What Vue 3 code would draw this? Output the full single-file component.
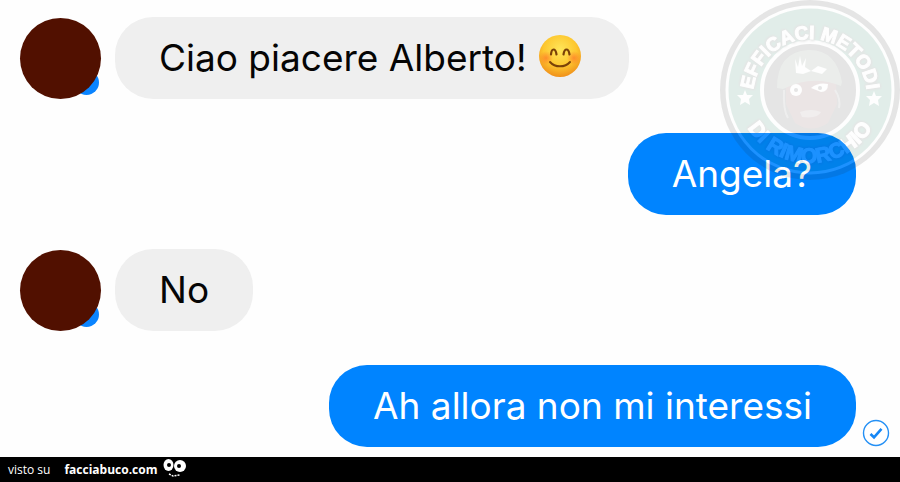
<script setup>
const messages = [
    { id: 1, text: 'Ciao piacere Alberto!', mine: false, emoji: true },
    { id: 2, text: 'Angela?', mine: true },
    { id: 3, text: 'No', mine: false },
    { id: 4, text: 'Ah allora non mi interessi', mine: true, sent: true }
]
</script>

<template>
    <div class="page">
        <main class="chat">
            <div v-for="message in messages" :key="message.id" class="row" :class="{ mine: message.mine }">
                <div v-if="!message.mine" class="avatar">
                    <span class="badge"></span>
                    <span class="face"></span>
                </div>
                <p class="bubble">
                    <span>{{ message.text }}</span>
                    <svg v-if="message.emoji" class="emoji" viewBox="0 0 42 42" role="img" aria-label="sorriso">
                        <defs>
                            <radialGradient id="skin" cx="50%" cy="35%" r="65%">
                                <stop offset="0" stop-color="#ffe65a" />
                                <stop offset="0.6" stop-color="#fdc72f" />
                                <stop offset="1" stop-color="#f0901a" />
                            </radialGradient>
                            <radialGradient id="cheek">
                                <stop offset="0" stop-color="#ff7a2a" stop-opacity="0.75" />
                                <stop offset="1" stop-color="#ff7a2a" stop-opacity="0" />
                            </radialGradient>
                        </defs>
                        <circle cx="21" cy="21" r="21" fill="url(#skin)" />
                        <circle cx="7" cy="23" r="7" fill="url(#cheek)" />
                        <circle cx="35" cy="23" r="7" fill="url(#cheek)" />
                        <g fill="none" stroke="#7a4208" stroke-linecap="round">
                            <path d="M12 19.500C12.500 12.800 16.500 12.800 17.500 19.500M24.500 19.500C25.500 12.800 29.500 12.800 30.500 19.500" stroke-width="2.200" />
                            <path d="M11 27C16 32.800 26 32.800 31 27" stroke-width="2" />
                        </g>
                    </svg>
                </p>
                <div v-if="message.mine" class="status">
                    <svg v-if="message.sent" class="check" viewBox="0 0 28 28" role="img" aria-label="inviato">
                        <circle cx="14" cy="14" r="12.500" fill="#fff" stroke="#2490f5" stroke-width="1.400" />
                        <path d="M8.500 15L12 18.300L19.500 9.800" fill="none" stroke="#1687f5" stroke-width="2.600" />
                    </svg>
                </div>
            </div>

            <svg class="stamp" viewBox="0 0 180 180" role="img" aria-label="Efficaci metodi di rimorchio">
                <defs>
                    <path id="arc-top" d="M33 96A57 57 0 1 1 147 96" />
                    <path id="arc-bottom" d="M17 90A73 73 0 0 0 163 90" />
                </defs>
                <circle cx="90" cy="90" r="90" fill="#222" />
                <circle cx="90" cy="90" r="83" fill="#00704a" stroke="#fff" stroke-width="3" />
                <circle cx="90" cy="90" r="48" fill="#222" stroke="#fff" stroke-width="4" />
                <!-- volto con elmetto -->
                <path d="M66 82Q90 72 116 82L117 104L108 123Q91 134 75 123L66 104Z" fill="#5e2428" />
                <path d="M57 88Q57 52 88 50Q116 49 122 82L121 86Q92 74 63 89Z" fill="#59705d" />
                <path d="M64 90Q63 110 68 118M115 90Q121 99 119 108" fill="none" stroke="#777" stroke-width="2" />
                <path d="M76 73L75 59L78 67L80 56L82 66L86 58L85 67L91 71L98 66L107 69L102 74L91 71L83 74Z" fill="#fff" />
                <circle cx="76" cy="90" r="6" fill="#fff" />
                <circle cx="76" cy="90" r="2" fill="#222" />
                <path d="M91 88Q98 82 108 84Q108 92 101 92Z" fill="#fff" />
                <circle cx="100" cy="88" r="2" fill="#222" />
                <path d="M80 112Q91 108 101 112Q98 119 82 117Z" fill="#8c7777" />
                <g fill="#fff">
                    <path d="M25 90L27 95L33 95L29 99L30 105L25 102L20 105L21 99L17 95L23 95Z" />
                    <path d="M154 91L156 96L162 96L158 100L159 106L154 103L149 106L150 100L146 96L152 96Z" />
                </g>
                <g class="stamp-text">
                    <text><textPath href="#arc-top" startOffset="50%">EFFICACI METODI</textPath></text>
                    <text class="stamp-bottom"><textPath href="#arc-bottom" startOffset="50%">DI RIMORCHIO</textPath></text>
                </g>
            </svg>
        </main>

        <footer class="footer">
            <span>visto su</span>
            <a class="site" href="#">facciabuco.com</a>
            <svg class="eyes" viewBox="0 0 24 20" aria-hidden="true">
                <ellipse cx="5.500" cy="7" rx="5" ry="6" fill="#fff" />
                <circle cx="17" cy="8" r="6" fill="#fff" />
                <circle cx="6" cy="7" r="2" />
                <circle cx="16" cy="8" r="2" />
                <path d="M6 16L10 18L17 17" fill="none" stroke="#fff" stroke-width="1.500" stroke-dasharray="2 1" />
            </svg>
        </footer>
    </div>
</template>

<style>
body {
    margin: 0;
    background-color: #fefefe;
}
</style>

<style scoped>
.page {
    display: flex;
    flex-direction: column;
}

.chat {
    position: relative;
    display: flex;
    flex-direction: column;
    gap: 34px;
    padding: 17px 0 10px 20px;
}

.row {
    display: flex;
    align-items: center;
    gap: 14px;
}

.row.mine {
    justify-content: flex-end;
    align-items: flex-end;
    gap: 6px;
}

.avatar {
    position: relative;
    width: 81px;
    height: 81px;
}

.face {
    position: absolute;
    inset: 0;
    border-radius: 50%;
    background-color: #511000;
}

.badge {
    position: absolute;
    right: 2px;
    bottom: 4px;
    width: 25px;
    height: 25px;
    border-radius: 50%;
    background-color: #0a84ff;
}

.bubble {
    display: flex;
    align-items: center;
    gap: 12px;
    box-sizing: border-box;
    min-height: 82px;
    margin: 0;
    padding: 0 44px;
    border-radius: 38px;
    background-color: #efefef;
    color: #050505;
    font-family: Inter, "Liberation Sans", sans-serif;
    font-size: 37px;
    line-height: 48px;
}

.mine .bubble {
    background-color: #0084ff;
    color: #fff;
}

.emoji {
    width: 42px;
    height: 42px;
    margin: 0 4px 4px 0;
}

.status {
    width: 38px;
    height: 28px;
}

.check {
    display: block;
    width: 28px;
    height: 28px;
}

.stamp {
    position: absolute;
    top: 0;
    right: 0;
    width: 180px;
    height: 180px;
    opacity: 0.11;
}

.stamp-text {
    fill: #fff;
    stroke: #fff;
    stroke-width: 1px;
    text-anchor: middle;
    font-family: "Liberation Sans", sans-serif;
    font-size: 19px;
    font-weight: 700;
    filter: drop-shadow(1px 1px 1px #222) drop-shadow(-1px -1px 1px #222);
}

.stamp-bottom {
    font-size: 21px;
}

.footer {
    display: flex;
    align-items: center;
    box-sizing: border-box;
    min-height: 25px;
    padding: 0 8px;
    background-color: #000;
    color: #fff;
    font-family: "Open Sans", sans-serif;
    font-size: 12px;
    line-height: 20px;
}

.site {
    margin-left: 14px;
    color: #fff;
    font-weight: 700;
    text-decoration: none;
}

.eyes {
    width: 24px;
    height: 20px;
    margin: 0 0 4px 6px;
}
</style>
